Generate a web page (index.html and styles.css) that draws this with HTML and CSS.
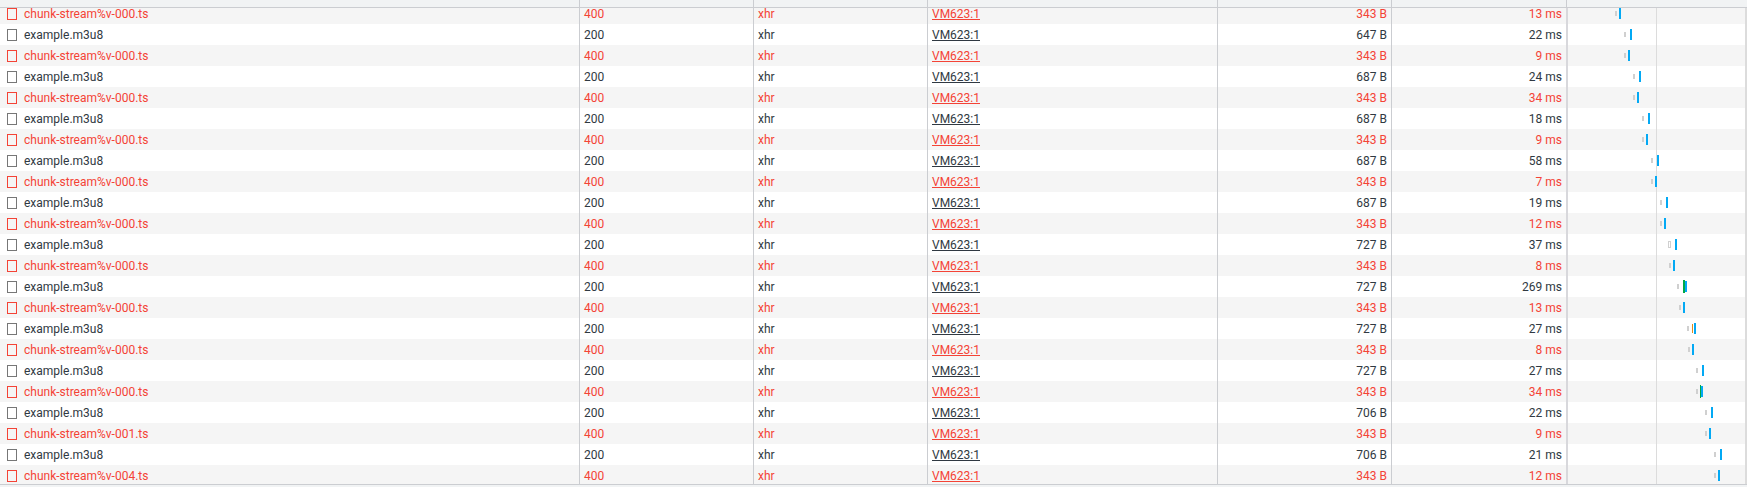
FILE: index.html
```html
<!DOCTYPE html>
<html lang="en">
<head>
  <meta charset="UTF-8" />
  <title>Network</title>
  <link rel="stylesheet" href="styles.css">
</head>
<body>
  <div class="panel">
    <div class="head">
      <div class="row">
        <div class="cell">Name</div>
        <div class="cell">Status</div>
        <div class="cell">Type</div>
        <div class="cell">Initiator</div>
        <div class="cell num">Size</div>
        <div class="cell num">Time</div>
        <div class="cell">Waterfall</div>
      </div>
    </div>

    <div class="list">
      <div class="rows">
        <div class="row err"><div class="cell"><i class="file"></i>chunk-stream%v-000.ts</div><div class="cell">400</div><div class="cell">xhr</div><div class="cell"><u>VM623:1</u></div><div class="cell num">343 B</div><div class="cell num">13 ms</div><div class="cell wf"><b class="bar wait" style="left:47px"></b><b class="bar recv" style="left:51px"></b></div></div>
        <div class="row"><div class="cell"><i class="file"></i>example.m3u8</div><div class="cell">200</div><div class="cell">xhr</div><div class="cell"><u>VM623:1</u></div><div class="cell num">647 B</div><div class="cell num">22 ms</div><div class="cell wf"><b class="bar wait" style="left:56px"></b><b class="bar recv" style="left:62px"></b></div></div>
        <div class="row err"><div class="cell"><i class="file"></i>chunk-stream%v-000.ts</div><div class="cell">400</div><div class="cell">xhr</div><div class="cell"><u>VM623:1</u></div><div class="cell num">343 B</div><div class="cell num">9 ms</div><div class="cell wf"><b class="bar wait" style="left:56px"></b><b class="bar recv" style="left:60px"></b></div></div>
        <div class="row"><div class="cell"><i class="file"></i>example.m3u8</div><div class="cell">200</div><div class="cell">xhr</div><div class="cell"><u>VM623:1</u></div><div class="cell num">687 B</div><div class="cell num">24 ms</div><div class="cell wf"><b class="bar wait" style="left:65px"></b><b class="bar recv" style="left:71px"></b></div></div>
        <div class="row err"><div class="cell"><i class="file"></i>chunk-stream%v-000.ts</div><div class="cell">400</div><div class="cell">xhr</div><div class="cell"><u>VM623:1</u></div><div class="cell num">343 B</div><div class="cell num">34 ms</div><div class="cell wf"><b class="bar wait" style="left:65px"></b><b class="bar recv" style="left:69px"></b></div></div>
        <div class="row"><div class="cell"><i class="file"></i>example.m3u8</div><div class="cell">200</div><div class="cell">xhr</div><div class="cell"><u>VM623:1</u></div><div class="cell num">687 B</div><div class="cell num">18 ms</div><div class="cell wf"><b class="bar wait" style="left:74px"></b><b class="bar recv" style="left:80px"></b></div></div>
        <div class="row err"><div class="cell"><i class="file"></i>chunk-stream%v-000.ts</div><div class="cell">400</div><div class="cell">xhr</div><div class="cell"><u>VM623:1</u></div><div class="cell num">343 B</div><div class="cell num">9 ms</div><div class="cell wf"><b class="bar wait" style="left:74px"></b><b class="bar recv" style="left:78px"></b></div></div>
        <div class="row"><div class="cell"><i class="file"></i>example.m3u8</div><div class="cell">200</div><div class="cell">xhr</div><div class="cell"><u>VM623:1</u></div><div class="cell num">687 B</div><div class="cell num">58 ms</div><div class="cell wf"><b class="bar wait" style="left:83px"></b><b class="bar recv" style="left:89px"></b></div></div>
        <div class="row err"><div class="cell"><i class="file"></i>chunk-stream%v-000.ts</div><div class="cell">400</div><div class="cell">xhr</div><div class="cell"><u>VM623:1</u></div><div class="cell num">343 B</div><div class="cell num">7 ms</div><div class="cell wf"><b class="bar wait" style="left:83px"></b><b class="bar recv" style="left:87px"></b></div></div>
        <div class="row"><div class="cell"><i class="file"></i>example.m3u8</div><div class="cell">200</div><div class="cell">xhr</div><div class="cell"><u>VM623:1</u></div><div class="cell num">687 B</div><div class="cell num">19 ms</div><div class="cell wf"><b class="bar wait" style="left:92px"></b><b class="bar recv" style="left:98px"></b></div></div>
        <div class="row err"><div class="cell"><i class="file"></i>chunk-stream%v-000.ts</div><div class="cell">400</div><div class="cell">xhr</div><div class="cell"><u>VM623:1</u></div><div class="cell num">343 B</div><div class="cell num">12 ms</div><div class="cell wf"><b class="bar wait" style="left:92px"></b><b class="bar recv" style="left:96px"></b></div></div>
        <div class="row"><div class="cell"><i class="file"></i>example.m3u8</div><div class="cell">200</div><div class="cell">xhr</div><div class="cell"><u>VM623:1</u></div><div class="cell num">727 B</div><div class="cell num">37 ms</div><div class="cell wf"><b class="bar wait hollow" style="left:100px"></b><b class="bar recv" style="left:107px"></b></div></div>
        <div class="row err"><div class="cell"><i class="file"></i>chunk-stream%v-000.ts</div><div class="cell">400</div><div class="cell">xhr</div><div class="cell"><u>VM623:1</u></div><div class="cell num">343 B</div><div class="cell num">8 ms</div><div class="cell wf"><b class="bar wait" style="left:101px"></b><b class="bar recv" style="left:105px"></b></div></div>
        <div class="row"><div class="cell"><i class="file"></i>example.m3u8</div><div class="cell">200</div><div class="cell">xhr</div><div class="cell"><u>VM623:1</u></div><div class="cell num">727 B</div><div class="cell num">269 ms</div><div class="cell wf"><b class="bar wait" style="left:109px"></b><b class="bar ttfb" style="left:115px;width:2px"></b><b class="bar recv" style="left:117px"></b></div></div>
        <div class="row err"><div class="cell"><i class="file"></i>chunk-stream%v-000.ts</div><div class="cell">400</div><div class="cell">xhr</div><div class="cell"><u>VM623:1</u></div><div class="cell num">343 B</div><div class="cell num">13 ms</div><div class="cell wf"><b class="bar wait" style="left:111px"></b><b class="bar recv" style="left:115px"></b></div></div>
        <div class="row"><div class="cell"><i class="file"></i>example.m3u8</div><div class="cell">200</div><div class="cell">xhr</div><div class="cell"><u>VM623:1</u></div><div class="cell num">727 B</div><div class="cell num">27 ms</div><div class="cell wf"><b class="bar wait" style="left:119px"></b><b class="bar send" style="left:124px"></b><b class="bar recv" style="left:126px"></b></div></div>
        <div class="row err"><div class="cell"><i class="file"></i>chunk-stream%v-000.ts</div><div class="cell">400</div><div class="cell">xhr</div><div class="cell"><u>VM623:1</u></div><div class="cell num">343 B</div><div class="cell num">8 ms</div><div class="cell wf"><b class="bar wait" style="left:120px"></b><b class="bar recv" style="left:124px"></b></div></div>
        <div class="row"><div class="cell"><i class="file"></i>example.m3u8</div><div class="cell">200</div><div class="cell">xhr</div><div class="cell"><u>VM623:1</u></div><div class="cell num">727 B</div><div class="cell num">27 ms</div><div class="cell wf"><b class="bar wait" style="left:128px"></b><b class="bar recv" style="left:134px"></b></div></div>
        <div class="row err"><div class="cell"><i class="file"></i>chunk-stream%v-000.ts</div><div class="cell">400</div><div class="cell">xhr</div><div class="cell"><u>VM623:1</u></div><div class="cell num">343 B</div><div class="cell num">34 ms</div><div class="cell wf"><b class="bar wait" style="left:128px"></b><b class="bar ttfb" style="left:132px;width:1px"></b><b class="bar recv" style="left:133px"></b></div></div>
        <div class="row"><div class="cell"><i class="file"></i>example.m3u8</div><div class="cell">200</div><div class="cell">xhr</div><div class="cell"><u>VM623:1</u></div><div class="cell num">706 B</div><div class="cell num">22 ms</div><div class="cell wf"><b class="bar wait" style="left:137px"></b><b class="bar recv" style="left:143px"></b></div></div>
        <div class="row err"><div class="cell"><i class="file"></i>chunk-stream%v-001.ts</div><div class="cell">400</div><div class="cell">xhr</div><div class="cell"><u>VM623:1</u></div><div class="cell num">343 B</div><div class="cell num">9 ms</div><div class="cell wf"><b class="bar wait" style="left:137px"></b><b class="bar recv" style="left:141px"></b></div></div>
        <div class="row"><div class="cell"><i class="file"></i>example.m3u8</div><div class="cell">200</div><div class="cell">xhr</div><div class="cell"><u>VM623:1</u></div><div class="cell num">706 B</div><div class="cell num">21 ms</div><div class="cell wf"><b class="bar wait" style="left:146px"></b><b class="bar recv" style="left:152px"></b></div></div>
        <div class="row err"><div class="cell"><i class="file"></i>chunk-stream%v-004.ts</div><div class="cell">400</div><div class="cell">xhr</div><div class="cell"><u>VM623:1</u></div><div class="cell num">343 B</div><div class="cell num">12 ms</div><div class="cell wf"><b class="bar wait" style="left:146px"></b><b class="bar recv" style="left:150px"></b></div></div>
      </div>
    </div>
  </div>
</body>
</html>
```

FILE: styles.css
```css
html, body {
  margin: 0;
  padding: 0;
  background: #f1f3f4;
  overflow: hidden;
}

*,
*::before,
*::after {
  box-sizing: border-box;
}

.panel {
  height: 487px;
  font-family: Roboto, "Liberation Sans", sans-serif;
  font-size: 12px;
  color: #303942;
}

.row {
  display: grid;
  grid-template-columns: 579px 174px 174px 290px 174px 175px 181px;
  height: 21px;
  line-height: 23px;
}

.cell {
  padding: 0 4px;
  border-left: 1px solid #cbcdd1;
  white-space: nowrap;
  overflow: hidden;
}

.cell:first-child {
  border-left: 0;
}

.num {
  text-align: right;
}

.head {
  height: 8px;
  border-bottom: 1px solid #cbcdd1;
  overflow: hidden;
}

/* only the descenders of the header labels are still in view */
.head .row {
  margin-top: -18px;
  height: 26px;
}

.list {
  height: 477px;
  overflow: hidden;
  background: white;
  border-bottom: 1px solid #cbcdd1;
}

.rows {
  margin-top: -5px;
}

.rows .row:nth-child(odd) {
  background: #f5f5f5;
}

.err {
  color: #f44336;
}

.file {
  display: inline-block;
  width: 10px;
  height: 12px;
  margin: 0 7px 0 3px;
  border: 1px solid #777;
  vertical-align: -2px;
}

.err .file {
  border-color: #f44336;
}

/* waterfall: a bar's left is its start time */
.wf {
  position: relative;
  padding: 0;
  border-left: 2px solid #d8d8dc;
  background:
    linear-gradient(#dcdcdc, #dcdcdc) 88px 0 / 1px 100% no-repeat,
    linear-gradient(#dcdcdc, #dcdcdc) 177px 0 / 2px 100% no-repeat;
}

.bar {
  position: absolute;
  top: 5px;
  width: 2px;
  height: 11px;
}

.wait {
  top: 8px;
  height: 5px;
  background: #d0d0d0;
}

.hollow {
  width: 3px;
  top: 7px;
  height: 7px;
  background: none;
  border: 1px solid #d0d0d0;
}

.recv {
  background: #03a9f4;
}

.ttfb {
  top: 4px;
  height: 13px;
  background: #00a846;
}

.send {
  width: 1px;
  top: 6px;
  height: 9px;
  background: #e08a1a;
}
```
